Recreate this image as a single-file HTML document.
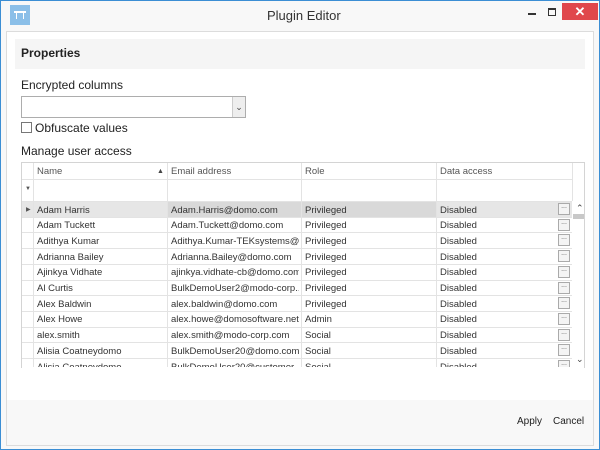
<!DOCTYPE html>
<html><head><meta charset="utf-8"><style>
*{margin:0;padding:0;box-sizing:border-box}
body{width:600px;height:450px;overflow:hidden;background:#fff;font-family:"Liberation Sans",sans-serif;color:#222;position:relative}
.a{position:absolute}
.t{font-size:12px;white-space:nowrap}
.cell{position:absolute;font-size:9.5px;color:#333;white-space:nowrap;overflow:hidden;line-height:15px}
.hl{position:absolute;height:1px;background:#e3e3e3}
.vl{position:absolute;width:1px;background:#e3e3e3}
.btn{position:absolute;width:12px;height:12px;border:1px solid #aaa;background:#f4f4f4;font-size:7px;line-height:6px;text-align:center;color:#555}
</style></head><body>
<div class="a" style="left:0;top:0;width:600px;height:450px;border:1px solid #3b8ed4;background:#f8f8f8"></div>
<div class="a" style="left:10px;top:5px;width:20px;height:20px;background:#8bbfe8"></div>
<div class="a" style="left:14px;top:11px;width:12px;height:2px;background:#fff"></div>
<div class="a" style="left:16px;top:13px;width:1px;height:6px;background:#fff"></div>
<div class="a" style="left:23px;top:13px;width:1px;height:6px;background:#fff"></div>
<div class="a t" style="left:267px;top:8px;font-size:13px;color:#333">Plugin Editor</div>
<div class="a" style="left:528px;top:13px;width:8px;height:2px;background:#333"></div>
<div class="a" style="left:548px;top:8px;width:8px;height:8px;border:1px solid #333;border-top-width:2px"></div>
<div class="a" style="left:562px;top:3px;width:36px;height:17px;background:#e0474c;color:#fff;text-align:center;font-size:13px;line-height:17px;font-weight:bold">✕</div>
<div class="a" style="left:6px;top:31px;width:588px;height:415px;background:#fff;border:1px solid #dcdcdc"></div>
<div class="a" style="left:15px;top:39px;width:570px;height:30px;background:#f5f5f5"></div>
<div class="a t" style="left:21px;top:46px;font-weight:bold;font-size:12px">Properties</div>
<div class="a t" style="left:21px;top:78px">Encrypted columns</div>
<div class="a" style="left:21px;top:96px;width:225px;height:22px;border:1px solid #adadad;background:#fff"></div>
<div class="a" style="left:232px;top:97px;width:13px;height:20px;background:#eee;border-left:1px solid #ccc;font-size:9px;text-align:center;line-height:20px;color:#444">⌄</div>
<div class="a" style="left:21px;top:122px;width:11px;height:11px;border:1px solid #777;background:#fff"></div>
<div class="a t" style="left:35px;top:121px">Obfuscate values</div>
<div class="a t" style="left:21px;top:144px">Manage user access</div>
<div class="a" style="left:21px;top:162px;width:564px;height:206px;border:1px solid #d4d4d4"></div>
<div class="a" style="left:22px;top:201px;width:550px;height:16px;background:#e6e6e6"></div>
<div class="a" style="left:167px;top:201px;width:269px;height:16px;background:#d9d9d9"></div>
<div id="g"></div>
<div class="cell" style="left:37px;top:164px;color:#555">Name</div>
<div class="a" style="left:157px;top:168px;font-size:7px;color:#444">▲</div>
<div class="cell" style="left:171px;top:164px;color:#555">Email address</div>
<div class="cell" style="left:305px;top:164px;color:#555">Role</div>
<div class="cell" style="left:440px;top:164px;color:#555">Data access</div>
<div class="a" style="left:25px;top:186px;font-size:6px;color:#555">▼</div>
<div class="a" style="left:26px;top:206px;font-size:6px;color:#555">▶</div>
<div class="a" style="left:576px;top:203px;font-size:9px;color:#444">⌃</div>
<div class="a" style="left:573px;top:214px;width:11px;height:5px;background:#c8c8c8"></div>
<div class="a" style="left:576px;top:354px;font-size:9px;color:#444">⌄</div>
<div class="a" style="left:7px;top:400px;width:586px;height:45px;background:#f8f8f8"></div>
<div class="a t" style="left:517px;top:416px;font-size:10px">Apply</div>
<div class="a t" style="left:553px;top:416px;font-size:10px">Cancel</div>
<script>
var d=[["Adam Harris","Adam.Harris@domo.com","Privileged"],["Adam Tuckett","Adam.Tuckett@domo.com","Privileged"],["Adithya Kumar","Adithya.Kumar-TEKsystems@...","Privileged"],["Adrianna Bailey","Adrianna.Bailey@domo.com","Privileged"],["Ajinkya Vidhate","ajinkya.vidhate-cb@domo.com","Privileged"],["Al Curtis","BulkDemoUser2@modo-corp....","Privileged"],["Alex Baldwin","alex.baldwin@domo.com","Privileged"],["Alex Howe","alex.howe@domosoftware.net","Admin"],["alex.smith","alex.smith@modo-corp.com","Social"],["Alisia Coatneydomo","BulkDemoUser20@domo.com","Social"],["Alisia Coatneydomo","BulkDemoUser20@customer...","Social"]];
var h="";
[179,201].forEach(function(y){h+='<div class="hl" style="left:22px;top:'+y+'px;width:550px"></div>'});
[33,167,301,436].forEach(function(x){h+='<div class="vl" style="left:'+x+'px;top:163px;height:204px"></div>'});
h+='<div class="vl" style="left:572px;top:163px;height:38px"></div>';
for(var i=0;i<d.length;i++){var y=201+i*15.7;
if(i>0)h+='<div class="hl" style="left:22px;top:'+Math.round(y)+'px;width:550px"></div>';
var ty=y+1.5;
h+='<div class="cell" style="left:37px;top:'+ty+'px;width:128px">'+d[i][0]+'</div>';
h+='<div class="cell" style="left:171px;top:'+ty+'px;width:128px">'+d[i][1]+'</div>';
h+='<div class="cell" style="left:305px;top:'+ty+'px">'+d[i][2]+'</div>';
h+='<div class="cell" style="left:440px;top:'+ty+'px">Disabled</div>';
h+='<div class="btn" style="left:558px;top:'+(y+2)+'px">...</div>';}
document.getElementById("g").innerHTML=h;
</script>
<div class="a" style="left:22px;top:367px;width:562px;height:30px;background:#fff"></div>
</body></html>
